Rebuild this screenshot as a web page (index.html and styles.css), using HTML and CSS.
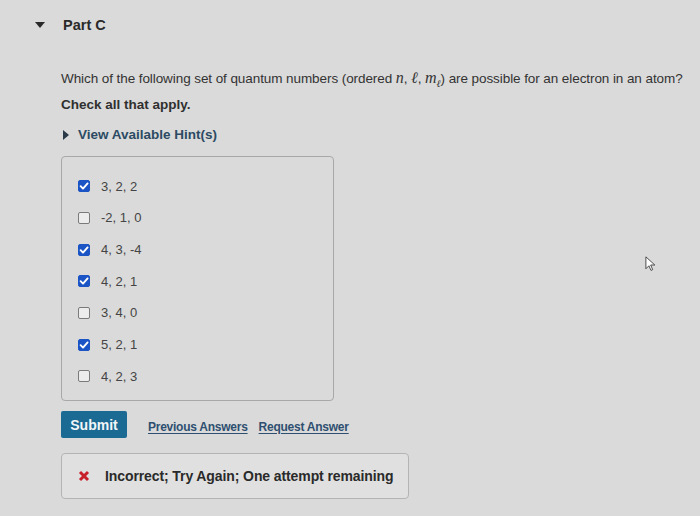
FILE: index.html
```html
<!DOCTYPE html>
<html>
<head>
<meta charset="utf-8">
<link rel="stylesheet" href="styles.css">
</head>
<body>
<div class="page">
  <div class="part-header">
    <span class="caret-down"></span>
    <span class="part-title">Part C</span>
  </div>
  <div class="content">
    <p class="question">Which of the following set of quantum numbers (ordered <i class="math">n</i>, <i class="math">ℓ</i>, <i class="math">m<sub>ℓ</sub></i>) are possible for an electron in an atom?</p>
    <p class="instr">Check all that apply.</p>
    <div class="hint"><span class="caret-right"></span><span>View Available Hint(s)</span></div>
    <div class="options">
      <div class="opt"><span class="cb on"><svg viewBox="0 0 12 12"><path d="M2.6 6.2 L5 8.6 L9.6 3.4" fill="none" stroke="#fff" stroke-width="1.9" stroke-linecap="round" stroke-linejoin="round"/></svg></span><span>3, 2, 2</span></div>
      <div class="opt"><span class="cb"></span><span>-2, 1, 0</span></div>
      <div class="opt"><span class="cb on"><svg viewBox="0 0 12 12"><path d="M2.6 6.2 L5 8.6 L9.6 3.4" fill="none" stroke="#fff" stroke-width="1.9" stroke-linecap="round" stroke-linejoin="round"/></svg></span><span>4, 3, -4</span></div>
      <div class="opt"><span class="cb on"><svg viewBox="0 0 12 12"><path d="M2.6 6.2 L5 8.6 L9.6 3.4" fill="none" stroke="#fff" stroke-width="1.9" stroke-linecap="round" stroke-linejoin="round"/></svg></span><span>4, 2, 1</span></div>
      <div class="opt"><span class="cb"></span><span>3, 4, 0</span></div>
      <div class="opt"><span class="cb on"><svg viewBox="0 0 12 12"><path d="M2.6 6.2 L5 8.6 L9.6 3.4" fill="none" stroke="#fff" stroke-width="1.9" stroke-linecap="round" stroke-linejoin="round"/></svg></span><span>5, 2, 1</span></div>
      <div class="opt"><span class="cb"></span><span>4, 2, 3</span></div>
    </div>
    <div class="actions">
      <button class="submit">Submit</button>
      <a class="link">Previous Answers</a>
      <a class="link">Request Answer</a>
    </div>
    <div class="feedback">
      <svg class="xmark" viewBox="0 0 12 12"><path d="M2 2 L10 10 M10 2 L2 10" stroke="#c8202a" stroke-width="3" stroke-linecap="butt"/></svg>
      <span>Incorrect; Try Again; One attempt remaining</span>
    </div>
  </div>
  <svg class="cursor" viewBox="0 0 14 20"><path d="M1 1 L1 15 L4.5 11.5 L7 17 L9 16 L6.6 10.6 L11.5 10.6 Z" fill="#fff" stroke="#333" stroke-width="1" stroke-linejoin="round"/></svg>
</div>
</body>
</html>
```
FILE: styles.css
```css
html, body {
  margin: 0;
  padding: 0;
}
body {
  background: #dadada;
  font-family: "Liberation Sans", Arial, sans-serif;
  color: #2b2b2b;
}
.page {
  position: relative;
  width: 700px;
  height: 516px;
  overflow: hidden;
}
.part-header {
  display: flex;
  align-items: center;
  padding: 16px 0 0 35px;
  height: 18px;
}
.caret-down {
  width: 0;
  height: 0;
  border-left: 5px solid transparent;
  border-right: 5px solid transparent;
  border-top: 6px solid #2a2a2a;
  margin-right: 18px;
}
.part-title {
  font-size: 14.5px;
  font-weight: bold;
  color: #2a2a2a;
}
.content {
  padding-left: 61px;
  padding-top: 0;
}
.question {
  margin: 35px 0 0 0;
  font-size: 13.5px;
  line-height: 18px;
  color: #333;
  letter-spacing: -0.08px;
}
.math {
  font-family: "Liberation Serif", "Times New Roman", serif;
  font-size: 16px;
}
.math sub {
  font-size: 10px;
}
.instr {
  margin: 3px 0 0 0;
  font-size: 13.5px;
  line-height: 18px;
  font-weight: bold;
  color: #2f2f2f;
}
.hint {
  display: flex;
  align-items: center;
  margin-top: 12px;
  font-size: 13.5px;
  line-height: 18px;
  font-weight: bold;
  color: #2c4a63;
}
.caret-right {
  width: 0;
  height: 0;
  border-top: 5px solid transparent;
  border-bottom: 5px solid transparent;
  border-left: 6px solid #2a3a48;
  margin-left: 2px;
  margin-right: 9px;
}
.options {
  margin-top: 12px;
  width: 273px;
  height: 245px;
  box-sizing: border-box;
  border: 1px solid #a8a8a8;
  border-radius: 4px;
  padding: 20px 0 0 16px;
  display: flex;
  flex-direction: column;
  gap: 13.7px;
}
.opt {
  display: flex;
  align-items: center;
  height: 18px;
  font-size: 13px;
  color: #444;
}
.cb {
  width: 12px;
  height: 12px;
  box-sizing: border-box;
  border: 1px solid #7a7a7a;
  border-radius: 2px;
  background: #ececec;
  margin-right: 11px;
  display: flex;
}
.cb.on {
  background: #1b54c4;
  border-color: #1b54c4;
}
.cb svg {
  width: 12px;
  height: 12px;
  margin: -1px;
}
.actions {
  display: flex;
  align-items: center;
  margin-top: 10px;
}
.submit {
  width: 66px;
  height: 27px;
  border: none;
  border-radius: 2px;
  background: #1a6a93;
  color: #f2f6f8;
  font-family: "Liberation Sans", Arial, sans-serif;
  font-size: 14px;
  font-weight: bold;
  padding: 0;
  margin-right: 21px;
}
.link {
  font-size: 12px;
  font-weight: bold;
  color: #2e4f70;
  text-decoration: underline;
  text-underline-offset: 2px;
  letter-spacing: -0.25px;
  margin-right: 11px;
  margin-top: 4px;
}
.feedback {
  margin-top: 15px;
  width: 348px;
  height: 46px;
  box-sizing: border-box;
  border: 1px solid #b4b4b4;
  border-radius: 4px;
  background: #e0e0e0;
  display: flex;
  align-items: center;
  padding-left: 16px;
  font-size: 14px;
  font-weight: bold;
  color: #2a2a2a;
  white-space: nowrap;
  letter-spacing: -0.1px;
}
.xmark {
  width: 12px;
  height: 12px;
  margin-right: 15px;
}
.cursor {
  position: absolute;
  left: 645px;
  top: 256px;
  width: 12px;
  height: 17px;
}
```
